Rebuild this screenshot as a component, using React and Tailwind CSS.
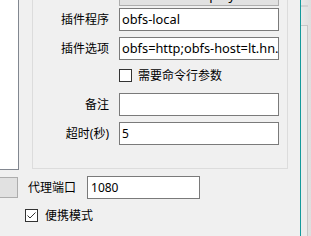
import React from 'react';

const font = "font-['Noto_Sans','Noto_Sans_CJK_SC',sans-serif]";

const Field = ({ label, value, small }) => (
  <div className="flex items-center">
    <div className="w-[76px] text-right text-[12px] leading-none text-black">{label}</div>
    <div
      className={`ml-[10px] w-[160px] h-[23px] bg-white border border-[#7a7a7a] flex items-center pl-[2px] overflow-hidden whitespace-nowrap text-black ${small ? 'text-[12px]' : 'text-[12.8px]'}`}
    >
      {value}
    </div>
  </div>
);

const CheckBox = ({ checked }) => (
  <div className="w-[13px] h-[13px] bg-white border border-[#333333] flex items-center justify-center shrink-0">
    {checked && (
      <svg width="11" height="11" viewBox="0 0 11 11">
        <path d="M1.5 5.5 L4 8 L9.5 2.5" fill="none" stroke="#333333" strokeWidth="1" />
      </svg>
    )}
  </div>
);

const App = () => {
  return (
    <div className={`w-[311px] h-[236px] bg-[#f0f0f0] flex overflow-hidden ${font}`}>
      <div className="w-[300px] flex flex-col">
        {/* top: list box + group box */}
        <div className="flex items-start">
          <div className="w-[19px] h-[170px] bg-white border-r border-b border-[#828790]" />
          <div className="ml-[13px] w-[256px] h-[169px] border-x border-b border-[#dcdcdc] flex flex-col">
            <div className="mt-[-15px] flex items-center">
              <div className="w-[76px]" />
              <div className="ml-[10px] w-[160px] h-[21px] bg-[#e1e1e1] border border-[#adadad] flex items-center pl-[3px] text-[13px] text-black whitespace-nowrap overflow-hidden">
                chacha20-ietf-poly1305
              </div>
            </div>
            <div className="mt-[2px]">
              <Field label="插件程序" value="obfs-local" />
            </div>
            <div className="mt-[6px]">
              <Field label="插件选项" value="obfs=http;obfs-host=lt.hn." />
            </div>
            <div className="mt-[9px] flex items-center">
              <div className="w-[76px]" />
              <div className="ml-[10px] flex items-center">
                <CheckBox />
                <span className="ml-[6px] text-[12px] leading-none text-black">需要命令行参数</span>
              </div>
            </div>
            <div className="mt-[11px]">
              <Field label="备注" value="" />
            </div>
            <div className="mt-[6px]">
              <Field label="超时(秒)" value="5" small />
            </div>
          </div>
        </div>

        {/* proxy port row */}
        <div className="mt-[6px] flex items-center h-[23px]">
          <div className="w-[18px] h-[21px] bg-[#e1e1e1] border border-l-0 border-[#adadad]" />
          <span className="ml-[10px] text-[12px] leading-none text-black">代理端口</span>
          <div className="ml-[11px] w-[113px] h-[23px] bg-white border border-[#7a7a7a] flex items-center pl-[3px] text-[12px] text-black">
            1080
          </div>
        </div>

        {/* portable mode */}
        <div className="mt-[10px] ml-[25px] flex items-center">
          <CheckBox checked />
          <span className="ml-[7px] text-[12px] leading-none text-black">便携模式</span>
        </div>
      </div>

      {/* window edge */}
      <div className="w-[1px] h-full bg-[#12999b]" />
      <div className="flex-1 h-full bg-gradient-to-r from-[#e9e9e9] to-[#dedede] flex flex-col">
        <div className="mt-[5px] w-[7px] h-[2px] bg-[#d2d2d2]" />
        <div className="mt-[18px] w-[7px] flex-1 border-t border-r border-[#c6c6c6] bg-[#ebebeb]" />
      </div>
    </div>
  );
};

export default App;
